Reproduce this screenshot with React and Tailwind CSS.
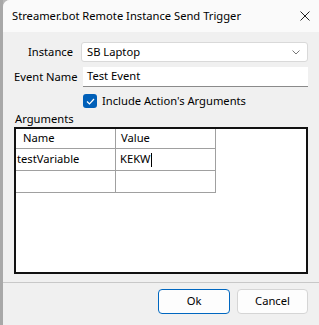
import React from "react";

export default function App() {
  const font = { fontFamily: '"Noto Sans", "Open Sans", sans-serif' };
  return (
    <div className="w-[319px] h-[325px] flex bg-[#b8b8b8] overflow-hidden text-[11.2px] text-black whitespace-nowrap" style={font}>
      <div className="w-[3px] bg-[#a8a8a8]" />
      <div className="flex-1 flex flex-col rounded-tl-[7px] overflow-hidden bg-[#f0f0f0]">
        <div className="h-[32px] bg-[#fafafa] flex items-center justify-between pl-[9px] pr-[8px]">
          <span className="text-[11.2px] leading-none pb-[1px]">Streamer.bot Remote Instance Send Trigger</span>
          <svg width="10" height="10" viewBox="0 0 10 10" className="mr-[1px]">
            <path d="M0.5 0.5 L9.5 9.5 M9.5 0.5 L0.5 9.5" stroke="#222" strokeWidth="1" />
          </svg>
        </div>
        <div className="flex-1 flex flex-col">
          <div className="flex flex-col pl-[11px] pr-[11px] pt-[10px]">
            <div className="flex items-center h-[20px]">
              <div className="w-[60px] text-right pr-[1px]">Instance</div>
              <div className="ml-[7px] flex-1 h-[20px] bg-white border border-[#d9d9d9] rounded-[3px] flex items-center justify-between pl-[5px] pr-[7px]">
                <span>SB Laptop</span>
                <svg width="8" height="5" viewBox="0 0 8 5">
                  <path d="M0.5 0.5 L4 4 L7.5 0.5" stroke="#777" fill="none" strokeWidth="1" />
                </svg>
              </div>
            </div>
            <div className="flex items-center h-[20px] mt-[5px]">
              <div className="w-[61px] text-right">Event Name</div>
              <div className="ml-[8px] flex-1 h-[20px] bg-white border-b border-[#8a8a8a] flex items-center pl-[4px]">
                <span>Test Event</span>
              </div>
            </div>
            <div className="flex items-center mt-[7px] ml-[69px] h-[14px]">
              <div className="w-[14px] h-[14px] rounded-[3px] bg-[#005fb8] flex items-center justify-center">
                <svg width="9" height="7" viewBox="0 0 9 7">
                  <path d="M1 3.5 L3.5 6 L8 1" stroke="white" fill="none" strokeWidth="1.2" />
                </svg>
              </div>
              <span className="ml-[5px]">Include Action's Arguments</span>
            </div>
            <div className="mt-[4px] ml-[1px] h-[14px] leading-[14px]">Arguments</div>
            <div className="mt-[1px] h-[147px] bg-white border-2 border-[#111]">
              <div className="grid grid-cols-[100px_100px] w-[200px]">
                <div className="h-[20px] border-r border-b border-[#a0a0a0] flex items-center pl-[7px]">Name</div>
                <div className="h-[20px] border-r border-b border-[#a0a0a0] flex items-center pl-[5px]">Value</div>
                <div className="h-[22px] border-r border-b border-[#a0a0a0] flex items-center pl-[1px]">testVariable</div>
                <div className="h-[22px] border-r border-b border-[#a0a0a0] flex items-center pl-[4px]">
                  <span>KEKW</span>
                  <span className="w-[1px] h-[14px] bg-black ml-[1px]" />
                </div>
                <div className="h-[22px] border-r border-b border-[#a0a0a0]" />
                <div className="h-[22px] border-r border-b border-[#a0a0a0]" />
              </div>
            </div>
          </div>
          <div className="mt-[8px] h-px bg-[#c8c8c8]" />
          <div className="flex justify-end gap-[7px] pr-[11px] pt-[6px]">
            <button className="w-[72px] h-[25px] bg-[#fdfdfd] border border-[#0067c0] rounded-[4px] flex items-center justify-center">Ok</button>
            <button className="w-[71px] h-[25px] bg-[#fdfdfd] border border-[#d5d5d5] rounded-[4px] flex items-center justify-center">Cancel</button>
          </div>
        </div>
      </div>
    </div>
  );
}
